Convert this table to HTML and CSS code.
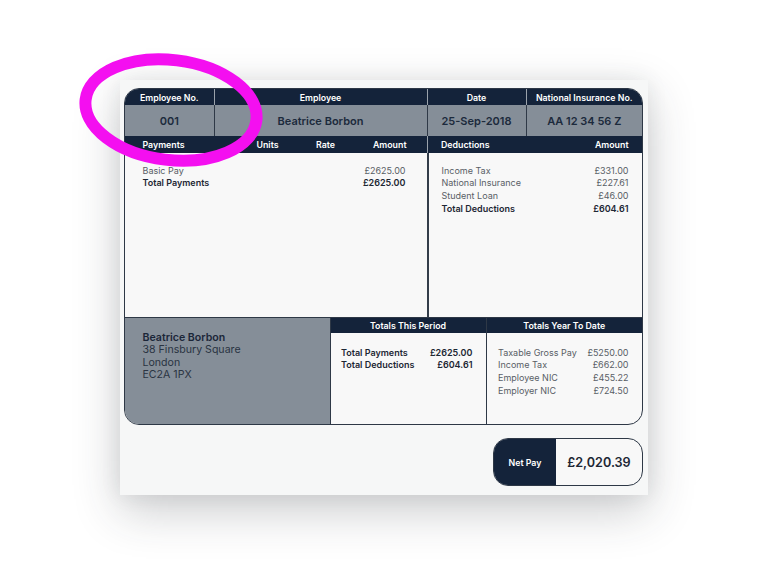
FILE: index.html
```html
<!DOCTYPE html>
<html lang="en">
<head>
<meta charset="utf-8">
<title>Payslip</title>
<link rel="stylesheet" href="styles.css">
</head>
<body>
<div class="stage">
  <div class="paper">
    <div class="card">
      <div class="top">
        <div class="tcol"><div class="th">Employee No.</div><div class="tv">001</div></div>
        <div class="tcol sep"><div class="th">Employee</div><div class="tv">Beatrice Borbon</div></div>
        <div class="tcol sep"><div class="th">Date</div><div class="tv">25-Sep-2018</div></div>
        <div class="tcol sep"><div class="th">National Insurance No.</div><div class="tv">AA 12 34 56 Z</div></div>
      </div>
      <div class="bar">
        <div class="bar-pay">
          <span class="b-label">Payments</span>
          <span class="b-units">Units</span>
          <span class="b-rate">Rate</span>
          <span class="b-amt">Amount</span>
        </div>
        <div class="bar-ded">
          <span>Deductions</span>
          <span>Amount</span>
        </div>
      </div>
      <div class="main">
        <div class="pay">
          <div class="row"><span>Basic Pay</span><span>£2625.00</span></div>
          <div class="row strong"><span>Total Payments</span><span>£2625.00</span></div>
        </div>
        <div class="ded">
          <div class="row"><span>Income Tax</span><span>£331.00</span></div>
          <div class="row"><span>National Insurance</span><span>£227.61</span></div>
          <div class="row"><span>Student Loan</span><span>£46.00</span></div>
          <div class="row strong"><span>Total Deductions</span><span>£604.61</span></div>
        </div>
      </div>
      <div class="bottom">
        <div class="addr">
          <div class="addr-name">Beatrice Borbon</div>
          <div>38 Finsbury Square</div>
          <div>London</div>
          <div>EC2A 1PX</div>
        </div>
        <div class="tot tp">
          <div class="tot-h">Totals This Period</div>
          <div class="tot-b">
            <div class="row strong"><span>Total Payments</span><span>£2625.00</span></div>
            <div class="row strong"><span>Total Deductions</span><span>£604.61</span></div>
          </div>
        </div>
        <div class="tot ytd">
          <div class="tot-h">Totals Year To Date</div>
          <div class="tot-b">
            <div class="row"><span>Taxable Gross Pay</span><span>£5250.00</span></div>
            <div class="row"><span>Income Tax</span><span>£662.00</span></div>
            <div class="row"><span>Employee NIC</span><span>£455.22</span></div>
            <div class="row"><span>Employer NIC</span><span>£724.50</span></div>
          </div>
        </div>
      </div>
    </div>
    <div class="net-wrap">
      <div class="net">
        <div class="net-l">Net Pay</div>
        <div class="net-v">£2,020.39</div>
      </div>
    </div>
  </div>
  <svg class="ring" width="240" height="150" viewBox="0 0 240 150" aria-hidden="true">
    <ellipse cx="120" cy="76" rx="86" ry="50" fill="none" stroke="#f40ff0" stroke-width="12" transform="rotate(7 120 76)"/>
  </svg>
</div>
</body>
</html>
```
FILE: styles.css
```css
* { box-sizing: border-box; }
html, body { margin: 0; padding: 0; background: #ffffff; }
body {
  font-family: Inter, "Noto Sans", "Liberation Sans", sans-serif;
  color: #1d2734;
}
.stage {
  position: relative;
  width: 768px;
  height: 576px;
  padding: 80px 0 0 120px;
  overflow: hidden;
  background: #ffffff;
}
.paper {
  width: 528px;
  height: 415px;
  background: #f6f7f7;
  padding: 8px 5px 0 4px;
  box-shadow: 0 16px 44px rgba(40, 45, 55, 0.24), 0 0 20px rgba(40, 45, 55, 0.08);
}
.card {
  width: 519px;
  height: 337px;
  border: 1.5px solid #2e3846;
  border-radius: 15px;
  overflow: hidden;
  background: #f8f8f8;
  display: flex;
  flex-direction: column;
}
.top {
  display: grid;
  grid-template-columns: 88.5px 213px 99px 1fr;
}
.tcol { display: flex; flex-direction: column; }
.th {
  height: 16px;
  background: #14233a;
  color: #ffffff;
  font-size: 8.8px;
  font-weight: 600;
  display: flex;
  align-items: center;
  justify-content: center;
}
.tv {
  height: 31px;
  background: #858e98;
  color: #1c2a3c;
  font-size: 11px;
  font-weight: 600;
  display: flex;
  align-items: center;
  justify-content: center;
}
.sep .th { border-left: 1.5px solid #9aa2ab; }
.sep .tv { border-left: 1.5px solid #2f3947; }
.bar {
  height: 17px;
  display: flex;
  background: #14233a;
  color: #ffffff;
  font-size: 8.8px;
  font-weight: 600;
}
.bar-pay {
  width: 301.5px;
  display: flex;
  align-items: center;
  padding: 0 20px 0 17.5px;
}
.b-label { flex: 1; }
.b-units { width: 50px; text-align: center; }
.b-rate { width: 58px; padding-left: 8px; text-align: center; }
.b-amt { width: 56px; text-align: right; }
.bar-ded {
  flex: 1;
  display: flex;
  align-items: center;
  justify-content: space-between;
  padding: 0 13.5px 0 13.5px;
  border-left: 1.5px solid #9aa2ab;
}
.main {
  height: 164px;
  display: flex;
}
.pay {
  width: 301.5px;
  padding: 11.5px 21px 0 17.5px;
}
.ded {
  flex: 1;
  border-left: 2px solid #333d4a;
  padding: 11.5px 13.5px 0 13px;
}
.row {
  display: flex;
  justify-content: space-between;
  font-size: 9px;
  line-height: 12.8px;
  color: #585e66;
}
.row.strong {
  color: #1d2734;
  font-weight: 600;
}
.bottom {
  flex: 1;
  display: flex;
  border-top: 1.5px solid #2e3846;
}
.addr {
  width: 204.5px;
  background: #858e98;
  padding: 14px 0 0 17.5px;
  font-size: 10.6px;
  line-height: 12.4px;
  color: #2a3442;
}
.addr-name {
  font-weight: 600;
  color: #1b2638;
}
.tot {
  display: flex;
  flex-direction: column;
  border-left: 1.5px solid #2e3846;
}
.tp { width: 156px; }
.ytd { flex: 1; }
.tot-h {
  height: 15px;
  background: #14233a;
  color: #ffffff;
  font-size: 8.8px;
  font-weight: 600;
  display: flex;
  align-items: center;
  justify-content: center;
}
.tp .tot-b { padding: 13.5px 13px 0 10.5px; }
.ytd .tot-b { padding: 13.5px 13.5px 0 11.5px; }
.net-wrap {
  display: flex;
  justify-content: flex-end;
  margin-top: 13px;
}
.net {
  width: 150px;
  height: 48px;
  border: 1.5px solid #2e3846;
  border-radius: 15px;
  overflow: hidden;
  display: flex;
  background: #f8f8f8;
}
.net-l {
  width: 62px;
  background: #14233a;
  color: #ffffff;
  font-size: 8.8px;
  font-weight: 600;
  display: flex;
  align-items: center;
  justify-content: center;
}
.net-v {
  flex: 1;
  display: flex;
  align-items: center;
  justify-content: center;
  font-size: 12.6px;
  font-weight: 600;
  color: #1d2734;
}
.ring {
  position: absolute;
  left: 51px;
  top: 34px;
}
```
